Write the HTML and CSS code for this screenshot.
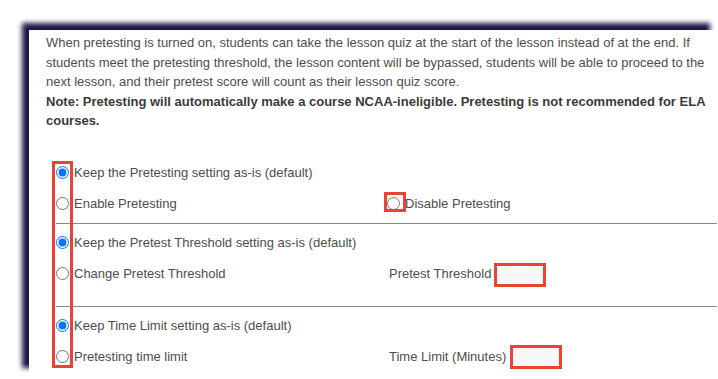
FILE: index.html
```html
<!DOCTYPE html>
<html>
<head>
<meta charset="utf-8">
<link rel="stylesheet" href="styles.css">
</head>
<body>
<div class="panel">
  <p class="intro">When pretesting is turned on, students can take the lesson quiz at the start of the lesson instead of at the end. If students meet the pretesting threshold, the lesson content will be bypassed, students will be able to proceed to the next lesson, and their pretest score will count as their lesson quiz score.<br><strong>Note: Pretesting will automatically make a course NCAA-ineligible. Pretesting is not recommended for ELA courses.</strong></p>

  <div class="section">
    <div class="row">
      <label class="opt"><input type="radio" name="pre" checked>Keep the Pretesting setting as-is (default)</label>
    </div>
    <div class="row">
      <label class="opt"><input type="radio" name="pre">Enable Pretesting</label>
      <label class="opt"><input type="radio" name="pre">Disable Pretesting</label>
    </div>
  </div>

  <div class="section section-tall">
    <div class="row">
      <label class="opt"><input type="radio" name="thr" checked>Keep the Pretest Threshold setting as-is (default)</label>
    </div>
    <div class="row">
      <label class="opt"><input type="radio" name="thr">Change Pretest Threshold</label>
      <label class="field">Pretest Threshold<input type="text" class="num"></label>
    </div>
  </div>

  <div class="section section-last">
    <div class="row">
      <label class="opt"><input type="radio" name="tl" checked>Keep Time Limit setting as-is (default)</label>
    </div>
    <div class="row">
      <label class="opt"><input type="radio" name="tl">Pretesting time limit</label>
      <label class="field">Time Limit (Minutes)<input type="text" class="num num-wide"></label>
    </div>
  </div>
</div>
<div class="annot annot-radios"></div>
<div class="annot annot-disable"></div>
</body>
</html>
```

FILE: styles.css
```css
html, body {
  margin: 0;
  padding: 0;
  background: #ffffff;
  overflow: hidden;
}

body {
  font-family: "Liberation Sans", Arial, sans-serif;
  font-size: 13px;
  color: #4d4d4d;
  height: 379px;
}

.panel {
  margin: 30px 1px 0 29px;
  height: 345px;
  background: #ffffff;
  box-shadow: -7px -7px 5px #1c1646;
}

.intro {
  margin: 0 10px 23px 17px;
  padding-top: 3px;
  line-height: 19.5px;
}

.intro strong {
  color: #3a3a3a;
}

.section {
  margin-left: 27px;
  padding: 3px 0 4px;
  border-bottom: 1px solid #8a8a8a;
}

.section-tall {
  padding-bottom: 17px;
}

.section-last {
  border-bottom: none;
}

.row {
  display: grid;
  grid-template-columns: 331px 1fr;
  align-items: center;
  height: 31px;
}

.opt,
.field {
  display: flex;
  align-items: center;
}

.field {
  padding-left: 2px;
}

.opt input {
  width: 13px;
  height: 13px;
  margin: 0 5px 0 0;
}

.num {
  box-sizing: border-box;
  width: 52px;
  height: 24px;
  margin: 3px 0 0 3px;
  border: 3px solid #ea4335;
  background: #f7f7f7;
  padding: 0;
  outline: none;
}

.num-wide {
  margin-top: 1px;
  margin-left: 4px;
}

.annot {
  position: absolute;
  box-sizing: border-box;
  border: 3px solid #ea4335;
}

.annot-radios {
  left: 52px;
  top: 161px;
  width: 21px;
  height: 207px;
}

.annot-disable {
  left: 384px;
  top: 192px;
  width: 22px;
  height: 20px;
}
```
